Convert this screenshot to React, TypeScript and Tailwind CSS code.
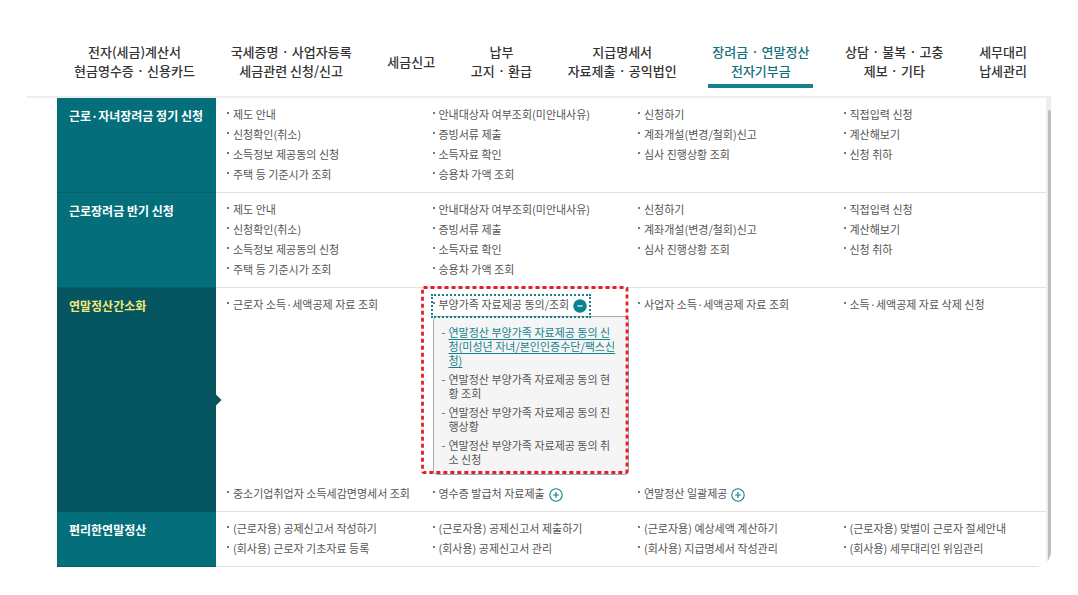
import { useState } from 'react'

interface MenuItem {
  label: string
  children?: string[]
  expandable?: boolean
}

interface MenuSection {
  title: string
  items: MenuItem[]
}

const tabs: string[][] = [
  ['전자(세금)계산서', '현금영수증 · 신용카드'],
  ['국세증명 · 사업자등록', '세금관련 신청/신고'],
  ['세금신고'],
  ['납부', '고지 · 환급'],
  ['지급명세서', '자료제출 · 공익법인'],
  ['장려금 · 연말정산', '전자기부금'],
  ['상담 · 불복 · 고충', '제보 · 기타'],
  ['세무대리', '납세관리'],
]

const incentiveItems: MenuItem[] = [
  { label: '제도 안내' },
  { label: '안내대상자 여부조회(미안내사유)' },
  { label: '신청하기' },
  { label: '직접입력 신청' },
  { label: '신청확인(취소)' },
  { label: '증빙서류 제출' },
  { label: '계좌개설(변경/철회)신고' },
  { label: '계산해보기' },
  { label: '소득정보 제공동의 신청' },
  { label: '소득자료 확인' },
  { label: '심사 진행상황 조회' },
  { label: '신청 취하' },
  { label: '주택 등 기준시가 조회' },
  { label: '승용차 가액 조회' },
]

const sections: MenuSection[] = [
  { title: '근로·자녀장려금 정기 신청', items: incentiveItems },
  { title: '근로장려금 반기 신청', items: incentiveItems },
  {
    title: '연말정산간소화',
    items: [
      { label: '근로자 소득·세액공제 자료 조회' },
      {
        label: '부양가족 자료제공 동의/조회',
        expandable: true,
        children: [
          '연말정산 부양가족 자료제공 동의 신청(미성년 자녀/본인인증수단/팩스신청)',
          '연말정산 부양가족 자료제공 동의 현황 조회',
          '연말정산 부양가족 자료제공 동의 진행상황',
          '연말정산 부양가족 자료제공 동의 취소 신청',
        ],
      },
      { label: '사업자 소득·세액공제 자료 조회' },
      { label: '소득·세액공제 자료 삭제 신청' },
      { label: '중소기업취업자 소득세감면명세서 조회' },
      { label: '영수증 발급처 자료제출', expandable: true },
      { label: '연말정산 일괄제공', expandable: true },
    ],
  },
  {
    title: '편리한연말정산',
    items: [
      { label: '(근로자용) 공제신고서 작성하기' },
      { label: '(근로자용) 공제신고서 제출하기' },
      { label: '(근로자용) 예상세액 계산하기' },
      { label: '(근로자용) 맞벌이 근로자 절세안내' },
      { label: '(회사용) 근로자 기초자료 등록' },
      { label: '(회사용) 공제신고서 관리' },
      { label: '(회사용) 지급명세서 작성관리' },
      { label: '(회사용) 세무대리인 위임관리' },
    ],
  },
]

function ToggleIcon({ open }: { open: boolean }) {
  return (
    <svg width="14" height="14" viewBox="0 0 14 14" fill="none" aria-hidden="true">
      <circle cx="7" cy="7" r="6.2" fill={open ? '#078490' : '#fff'} stroke="#16818d" strokeWidth="1.1" />
      <path d={open ? 'M4.4 7h5.2' : 'M4 7h6M7 4v6'} stroke={open ? '#fff' : '#16818d'} strokeWidth="1.2" />
    </svg>
  )
}

function SubMenu({ items }: { items: string[] }) {
  return (
    <ul className="mt-0.5 mr-1.5 mb-2 flex flex-col gap-[5px] rounded-sm border border-[#a3abae] bg-[#f5f5f5] py-2 pr-3 pl-2 leading-[14px] break-all">
      {items.map((text, i) => (
        <li key={text} className="flex">
          <span className="w-[7px] shrink-0">-</span>
          <a href="#" className={i === 0 ? 'text-[#16818d] underline underline-offset-2' : ''}>
            {text}
          </a>
        </li>
      ))}
    </ul>
  )
}

function Entry({ item }: { item: MenuItem }) {
  const [open, setOpen] = useState(Boolean(item.children))

  return (
    <li className="relative">
      <div className="relative flex h-5 w-fit items-center whitespace-nowrap">
        <span className="mr-1 mb-0.5 size-0.5 shrink-0 bg-[#777]" />
        <a href="#">{item.label}</a>
        {item.expandable && (
          <button type="button" aria-label={item.label} className="mt-1 ml-1" onClick={() => setOpen(!open)}>
            <ToggleIcon open={open} />
          </button>
        )}
        {item.children && (
          <span className="pointer-events-none absolute top-0 -right-1 -bottom-1 -left-0.5 z-10 border-2 border-dotted border-[#16818d]" />
        )}
      </div>
      {item.children && open && <SubMenu items={item.children} />}
      {/* Highlight frame */}
      {item.children && (
        <div className="pointer-events-none absolute -top-2 right-2.5 bottom-3 -left-3 z-20">
          <svg className="block size-full overflow-visible" aria-hidden="true">
            <rect
              x="1.5"
              y="1.5"
              width="100%"
              height="100%"
              rx="1"
              fill="none"
              stroke="#e3202b"
              strokeWidth="2.8"
              strokeDasharray="4 3"
            />
          </svg>
        </div>
      )}
    </li>
  )
}

function Section({ section, active }: { section: MenuSection; active: boolean }) {
  return (
    <section className="flex">
      <h2
        className={
          active
            ? 'relative w-[159px] shrink-0 border-b border-[#055660] bg-[#055660] pt-2 pl-3 text-xs leading-5 font-bold text-[#f2e77c]'
            : 'w-[159px] shrink-0 border-b border-[#04606c] bg-[#046f7b] pt-2 pl-3 text-xs leading-5 font-bold text-white'
        }
      >
        <a href="#">{section.title}</a>
        {active && (
          <svg className="absolute top-1/2 left-full -mt-1.5" width="6" height="12" viewBox="0 0 6 12" aria-hidden="true">
            <path d="M0 0.5L5.5 6L0 11.5Z" fill="#055660" />
          </svg>
        )}
      </h2>
      <ul className="grid flex-1 grid-cols-4 gap-x-[3px] border-b border-[#e2e2e2] pt-1.5 pb-2 pl-[11px]">
        {section.items.map((item) => (
          <Entry key={item.label} item={item} />
        ))}
      </ul>
    </section>
  )
}

export default function App() {
  const [activeTab, setActiveTab] = useState(5)

  return (
    <div className="min-h-screen bg-white px-[27px] pt-10 font-['Noto_Sans_CJK_KR',sans-serif] text-[11px] text-[#555]">
      <nav className="flex justify-between border-b-2 border-[#eeeeee] pr-5 pb-2 pl-[43px]">
        {tabs.map((lines, i) => (
          <a
            key={lines[0]}
            href="#"
            onClick={() => setActiveTab(i)}
            className={
              i === activeTab
                ? 'flex flex-col justify-center border-b-4 border-[#16818d] px-1 pt-0.5 pb-1 text-center text-[13px] leading-[19px] font-medium whitespace-nowrap text-[#16717c]'
                : 'flex flex-col justify-center border-b-4 border-transparent px-1 pt-0.5 pb-1 text-center text-[13px] leading-[19px] font-medium whitespace-nowrap text-[#333]'
            }
          >
            {lines.map((line) => (
              <span key={line}>{line}</span>
            ))}
          </a>
        ))}
      </nav>

      <div className="ml-[30px] flex overflow-hidden rounded-br-2xl">
        <div className="flex-1">
          {sections.map((section) => (
            <Section key={section.title} section={section} active={section.title === '연말정산간소화'} />
          ))}
        </div>
        {/* Scrollbar */}
        <div className="flex w-[5px] justify-end bg-[#eeeeee] pt-3">
          <div className="w-[3px] rounded-t-sm bg-[#bdbdbd]" />
        </div>
      </div>
    </div>
  )
}
